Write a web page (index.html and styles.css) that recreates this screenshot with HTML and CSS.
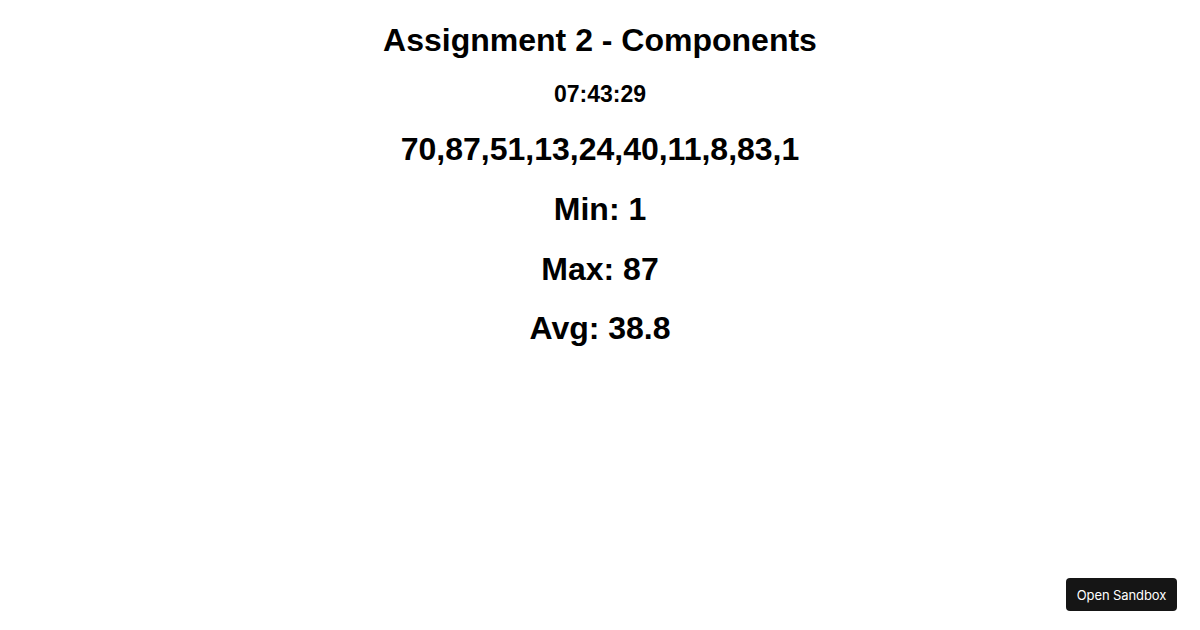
FILE: index.html
```html
<!DOCTYPE html>
<html>
<head>
<meta charset="utf-8">
<link rel="stylesheet" href="styles.css">
</head>
<body>
<div class="app">
  <h1 class="title">Assignment 2 - Components</h1>
  <h2 class="clock">07:43:29</h2>
  <h1 class="stat">70,87,51,13,24,40,11,8,83,1</h1>
  <h1 class="stat">Min: 1</h1>
  <h1 class="stat">Max: 87</h1>
  <h1 class="stat">Avg: 38.8</h1>
</div>
<a class="sandbox-btn">Open Sandbox</a>
</body>
</html>
```
FILE: styles.css
```css
html, body {
  background: #ffffff;
}
body {
  margin: 0 8px 8px;
  font-family: "Liberation Sans", Arial, sans-serif;
  color: #000;
}
.app {
  text-align: center;
}
.title, .stat {
  font-size: 32px;
  font-weight: bold;
  line-height: 1.2;
  margin: 21.44px 0;
}
.title {
  margin-top: 21px;
}
.clock {
  font-size: 23px;
  font-weight: bold;
  line-height: 1.2;
  margin: 19.92px 0;
}
.sandbox-btn {
  position: fixed;
  right: 23px;
  bottom: 19px;
  width: 111px;
  height: 33px;
  box-sizing: border-box;
  display: flex;
  align-items: center;
  justify-content: center;
  background: #151515;
  color: #ffffff;
  border-radius: 4px;
  font-family: Inter, "Liberation Sans", sans-serif;
  font-size: 13px;
  letter-spacing: -0.1px;
  text-decoration: none;
}
```
